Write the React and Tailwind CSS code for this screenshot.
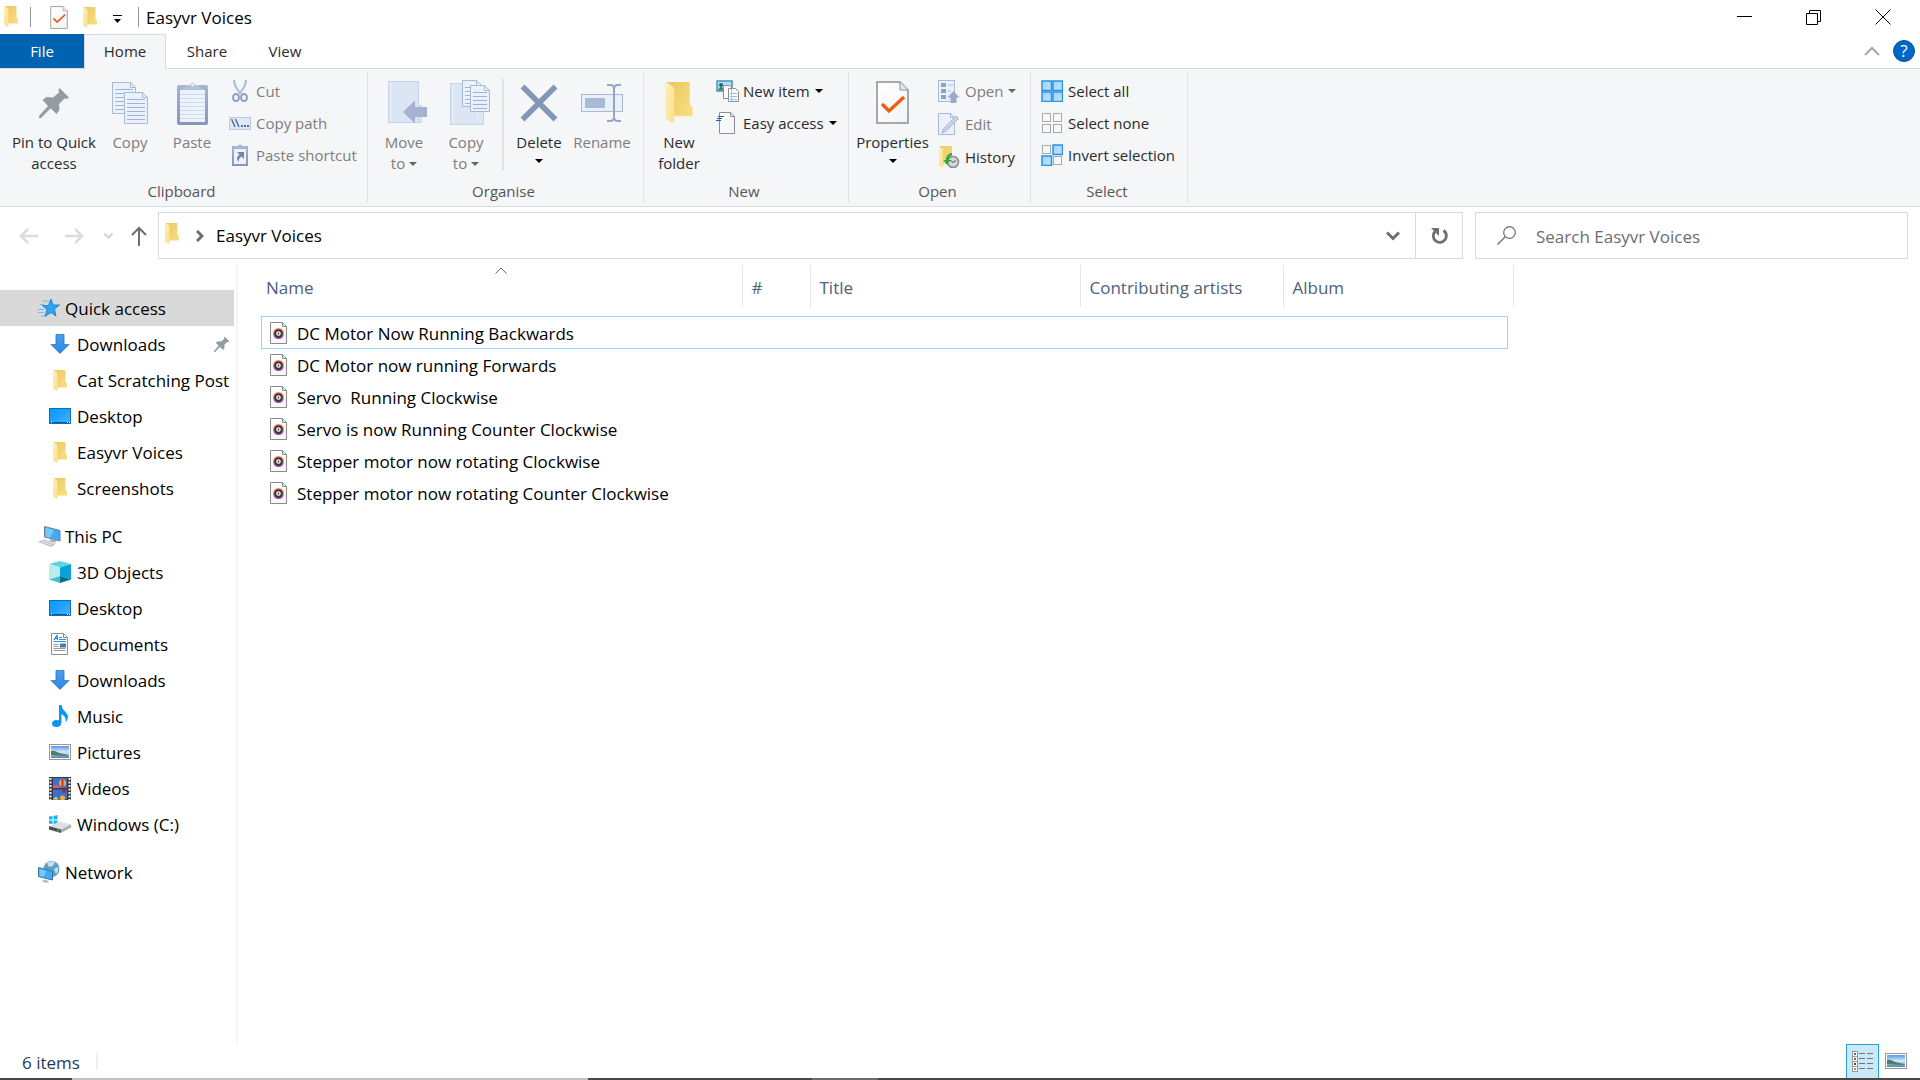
import React from "react";

/* ---------- shared gradients ---------- */
function Gradients() {
  return (
    <svg width="0" height="0" className="absolute" aria-hidden="true">
      <defs>
        <linearGradient id="folderBack" x1="0" y1="0" x2="1" y2="1">
          <stop offset="0" stopColor="#e9c762" />
          <stop offset="1" stopColor="#fbdf84" />
        </linearGradient>
        <linearGradient id="folderFlap" x1="0" y1="0" x2="1" y2="1">
          <stop offset="0" stopColor="#fff0b8" />
          <stop offset="1" stopColor="#fbdf8a" />
        </linearGradient>
        <linearGradient id="sky" x1="0" y1="0" x2="0" y2="1">
          <stop offset="0" stopColor="#5a94ea" />
          <stop offset="0.5" stopColor="#d4ecf6" />
          <stop offset="1" stopColor="#4d83b4" />
        </linearGradient>
        <linearGradient id="screen" x1="0" y1="0" x2="1" y2="1">
          <stop offset="0" stopColor="#0f98fb" />
          <stop offset="0.5" stopColor="#1fa2ff" />
          <stop offset="1" stopColor="#4cb6ff" />
        </linearGradient>
        <linearGradient id="paper" x1="0" y1="0" x2="1" y2="1">
          <stop offset="0" stopColor="#ffffff" />
          <stop offset="1" stopColor="#f1f3f6" />
        </linearGradient>
        <linearGradient id="disc" x1="0" y1="0" x2="0" y2="1">
          <stop offset="0" stopColor="#f58a3c" />
          <stop offset="0.5" stopColor="#d98a7a" />
          <stop offset="1" stopColor="#7d3fb0" />
        </linearGradient>
        <linearGradient id="clip" x1="0" y1="0" x2="0" y2="1">
          <stop offset="0" stopColor="#a5b5d2" />
          <stop offset="1" stopColor="#8497ba" />
        </linearGradient>
        <linearGradient id="cell" x1="0" y1="0" x2="1" y2="1">
          <stop offset="0" stopColor="#9fd4fb" />
          <stop offset="1" stopColor="#bfe4ff" />
        </linearGradient>
        <linearGradient id="arrowDown" x1="0" y1="0" x2="0" y2="1">
          <stop offset="0" stopColor="#4aa0ee" />
          <stop offset="1" stopColor="#2c87dc" />
        </linearGradient>
      </defs>
    </svg>
  );
}

function Svg({ w, h, vb, children, className = "" }) {
  return (
    <svg width={w} height={h} viewBox={vb || `0 0 ${w} ${h}`} fill="none" aria-hidden="true" className={`shrink-0 ${className}`}>
      {children}
    </svg>
  );
}

/* ---------- icons ---------- */
const Folder = ({ w = 14, h = 21 }) => (
  <Svg w={w} h={h} vb="0 0 28 42">
    <path d="M1 0h24v23l3 4v8H8V5z" fill="url(#folderBack)" />
    <path d="M0 0l9 6v34l-2 2-7-5z" fill="url(#folderFlap)" />
  </Svg>
);

const CheckDoc = ({ w = 18, h = 23 }) => (
  <Svg w={w} h={h} vb="0 0 33 43">
    <path d="M1 1h23l8 8v33H1z" fill="url(#paper)" stroke="#8f8f8f" strokeWidth="1.5" />
    <path d="M24 1v8h8" fill="#e6e6e6" stroke="#8f8f8f" />
    <path d="M6 23l7 7L28 16" stroke="#f25a16" strokeWidth="3.4" />
  </Svg>
);

const Pin = ({ size = 31, color = "#919da3" }) => (
  <Svg w={size} h={size} vb="0 0 31 31">
    <path d="M20.500 1L30 10.500l-2.500 1.500-2-.5-5.500 5.500.5 6-3 4-5.800-5.800L2 31H0v-2l9-10L3.500 13l4-3 6.500.5L20 5.500 19.500 3z" fill={color} />
  </Svg>
);

function Sheet({ x, y, w = 23, h = 31, step = 4 }) {
  const lines = [];
  for (let i = 7; i < h - 3; i += step) lines.push(i);
  return (
    <g transform={`translate(${x} ${y})`}>
      <path d={`M.5 .5h${w - 6}l5 5v${h - 6}H.5z`} fill="#eaf1fb" stroke="#a8b9d6" />
      <path d={`M${w - 5.5} .5v5h5`} stroke="#a8b9d6" />
      {lines.map((l) => (
        <path key={l} d={`M3 ${l + 0.5}h${w - 6}`} stroke="#a0b2d2" />
      ))}
    </g>
  );
}

const CopyIcon = () => (
  <Svg w={36} h={42}>
    <Sheet x={0} y={0} w={24} h={32} />
    <Sheet x={12} y={10} w={24} h={32} />
  </Svg>
);

const PasteIcon = () => (
  <Svg w={31} h={44}>
    <rect x="0" y="4" width="31" height="40" rx="2" fill="url(#clip)" />
    <rect x="3" y="9" width="25" height="32" fill="#eef3fb" />
    {[13, 17, 21, 25, 29, 33, 37].map((y) => (
      <path key={y} d={`M3 ${y + 0.5}h25`} stroke="#cfdaee" />
    ))}
    <path d="M5 9l5-5h3q2.500-4.500 5 0h3l5 5z" fill="#b3c0d9" />
    <circle cx="15.500" cy="4" r="1.500" fill="#eef3fb" />
  </Svg>
);

const CutIcon = () => (
  <Svg w={22} h={22}>
    <path d="M5 0q0 5 3 9l4 5M17 0q0 5-3 9l-4 5" stroke="#a9bad8" strokeWidth="2" />
    <ellipse cx="7" cy="17.500" rx="3" ry="3.500" stroke="#8fa1c4" strokeWidth="2" />
    <ellipse cx="15" cy="17.500" rx="3" ry="3.500" stroke="#8fa1c4" strokeWidth="2" />
  </Svg>
);

const CopyPathIcon = () => (
  <Svg w={22} h={22}>
    <rect x=".5" y="5.500" width="21" height="12" fill="#dfe8f6" stroke="#b9c8e2" />
    <path d="M2.500 7l3.500 8M6.500 7l3.500 8" stroke="#5d7092" strokeWidth="1.500" />
    <path d="M12 14h2M15 14h2M18 14h2" stroke="#5d7092" strokeWidth="2" />
  </Svg>
);

const PasteShortcutIcon = () => (
  <Svg w={22} h={22}>
    <rect x="3" y="2" width="16" height="20" fill="url(#clip)" />
    <rect x="5" y="5" width="12" height="15" fill="#eef3fb" />
    <path d="M7 4l4-4 4 4z" fill="#a5b5d2" />
    <path d="M8 8h7v7l-2.500-2.500Q9.500 14 9.500 18 6 14 10.500 10.500z" fill="#6f86b3" />
  </Svg>
);

const MoveToIcon = () => (
  <Svg w={46} h={43} vb="-7 0 46 43">
    <path d="M.5 .5h30v24h3v17H.5z" fill="#dbe5f4" stroke="#c6d3e8" />
    <path d="M3 1v40" stroke="#eaf1fb" />
    <path d="M30.500 42v-18" stroke="#c6d3e8" />
    <path d="M15 31l12-11.500V26h12v10H27v6.500z" fill="#a3b3d0" />
  </Svg>
);

const CopyToIcon = () => (
  <Svg w={49} h={45} vb="-8 0 49 45">
    <path d="M.5 3.500h30v24h3v17H.5z" fill="#dbe5f4" stroke="#c6d3e8" />
    <path d="M3 4v40M28 44V30" stroke="#eaf1fb" />
    <Sheet x={12} y={0} w={20} h={27} />
    <Sheet x={20} y={5} w={20} h={27} />
  </Svg>
);

const DeleteIcon = () => (
  <Svg w={38} h={38}>
    <path d="M2.500 2.500l33 33M35.500 2.500l-33 33" stroke="#8496b8" strokeWidth="5.500" />
  </Svg>
);

const RenameIcon = () => (
  <Svg w={42} h={38}>
    <rect x=".5" y="10.500" width="41" height="17" fill="#e8f0fb" stroke="#a8b9d6" />
    <rect x="4" y="14" width="20" height="10" fill="#a9bad6" />
    <path d="M26 1h3q4 0 4 4v28q0 4-4 4h-3M40 1h-3q-4 0-4 4M33 33q0 4 4 4h3" stroke="#94a6c6" strokeWidth="2" />
  </Svg>
);

const NewItemIcon = () => (
  <Svg w={23} h={22}>
    <rect x="1" y="1" width="15" height="10" fill="#b9ddf0" stroke="#4393bd" strokeWidth="1.500" />
    <circle cx="5" cy="5" r="2" fill="#2f5d75" />
    <path d="M2 10l3-4 3 4z" fill="#3c7f5a" />
    <path d="M7.500 5.500h6l3 3v10h-9z" fill="#fff" stroke="#8f8f8f" />
    <path d="M12.500 8.500h7l3 3v10h-10z" fill="#fff" stroke="#8f8f8f" />
    <path d="M14 13.500h7M14 16.500h7M14 19.500h7" stroke="#8fc0ee" />
    <path d="M15.500 9v12" stroke="#e7aab0" />
  </Svg>
);

const EasyAccessIcon = () => (
  <Svg w={22} h={22}>
    <path d="M3.500 .5h11l4 4v17h-15z" fill="url(#paper)" stroke="#8f8f8f" />
    <path d="M14.500 .5v4h4" stroke="#8f8f8f" />
    <path d="M2 4.500h6M1 6.500h5M0 8.500h5" stroke="#1d62ad" strokeWidth="1.200" />
  </Svg>
);

const OpenIcon = () => (
  <Svg w={22} h={23}>
    <rect x=".5" y=".5" width="16" height="21" fill="#eaf1fb" stroke="#a8b9d6" />
    <path d="M3 3h5v4H3zM3 9h5v4H3zM3 15h5v4H3z" fill="#8fa2c6" />
    <path d="M10 5h5M10 11h3" stroke="#a8b9d6" />
    <path d="M15.500 11l6 6.500h-3V23h-6v-5.500h-3z" fill="#9aabc9" />
  </Svg>
);

const EditIcon = () => (
  <Svg w={22} h={22}>
    <path d="M.5 .5h12l4 4v17H.5z" fill="#eaf1fb" stroke="#a8b9d6" />
    <path d="M12.500 .5v4h4" stroke="#a8b9d6" />
    <path d="M4 20l1.500-4L18 3l2.500 2.500L8 18z" fill="#c7d4e9" stroke="#a3b5d3" />
  </Svg>
);

const HistoryIcon = () => (
  <Svg w={22} h={22}>
    <path d="M1 0h13v18H5z" fill="url(#folderBack)" />
    <path d="M1 0l4 3v19l-4-3z" fill="url(#folderFlap)" />
    <circle cx="15" cy="16" r="5.500" fill="#d5d8da" stroke="#85898c" strokeWidth="1.500" />
    <path d="M12 14l3 2.500 3-2" stroke="#555" />
    <path d="M14 8q-5 1-5 7" stroke="#2faa3c" strokeWidth="2.500" />
    <path d="M5.500 14h7L9 19z" fill="#2faa3c" />
  </Svg>
);

function SelectIcon({ on }) {
  const spots = [[1, 1], [12, 1], [1, 12], [12, 12]];
  return (
    <Svg w={22} h={22}>
      {spots.map(([x, y], i) =>
        on[i] ? (
          <rect key={i} x={x} y={y} width="9.500" height="9.500" fill="url(#cell)" stroke="#2b93e0" strokeWidth="1.500" />
        ) : (
          <rect key={i} x={x + 0.5} y={y + 0.5} width="8" height="8" fill="#f7f7f7" stroke="#a9a9a9" />
        )
      )}
    </Svg>
  );
}

const Caret = ({ color = "#000" }) => (
  <Svg w={8} h={4}>
    <path d="M0 0h8L4 4z" fill={color} />
  </Svg>
);

const StarIcon = () => (
  <Svg w={22} h={18}>
    <path d="M13 0l2.200 6H21.500l-5 4 1.500 7-5-3.500L7 17.500 9 10.500 4.500 6.500h6z" fill="#2ba4f4" stroke="#1679c4" strokeWidth=".8" />
    <path d="M4 2h7M2 5.500h4M0 10.500h6M0 13.500h6M3 17h4" stroke="#6bbdf0" />
  </Svg>
);

const DownloadIcon = () => (
  <Svg w={22} h={20}>
    <path d="M7 .5h8v10h5L11 19.500 2 10.500h5z" fill="url(#arrowDown)" stroke="#2578c6" strokeWidth=".8" />
  </Svg>
);

const DesktopIcon = () => (
  <Svg w={22} h={16}>
    <rect x=".5" y=".5" width="21" height="15" fill="url(#screen)" stroke="#0c6fb8" />
    <path d="M1 14.500h20" stroke="#07579a" />
    <path d="M2 14.500h1M18 14.500h1M20 14.500h1" stroke="#fff" />
  </Svg>
);

const PcIcon = () => (
  <Svg w={23} h={21}>
    <path d="M6.500 .5l15.500 4v10.500L6.500 11z" fill="#3faaf5" stroke="#6a8397" />
    <path d="M7.500 1.800L16 4 12 12 7.500 10.700z" fill="#79c6fa" />
    <path d="M13 13l6 1.500-2 2-6-1.500z" fill="#a4acb3" />
    <path d="M0 16l6-2.500 12 4-4.500 3.500z" fill="#b9bfc4" />
    <path d="M3 16l11 3M5 14.800l11 3" stroke="#eef0f2" strokeWidth=".8" />
  </Svg>
);

const CubeIcon = () => (
  <Svg w={22} h={22}>
    <path d="M11 0l11 3-11 3.500L0 3z" fill="#5ed3e4" />
    <path d="M0 3l11 3.500V15L0 18.500z" fill="#bdecef" />
    <path d="M22 3L11 6.500V15l11 3.500z" fill="#07a3d8" />
    <path d="M0 18.500L11 15v7z" fill="#46c1cc" />
    <path d="M22 18.500L11 15v7z" fill="#046f86" />
  </Svg>
);

const DocumentIcon = () => (
  <Svg w={22} h={22}>
    <path d="M2.500 .5h12l4 4v17h-16z" fill="#fff" stroke="#8f8f8f" />
    <path d="M14.500 .5v4h4" stroke="#8f8f8f" />
    <path d="M5 7l3-4.500L8.500 7M6 5.500h2.500" stroke="#1b84cf" strokeWidth="1.200" />
    <path d="M10 4.500h3M10 6.500h7M4.500 8.500h12.500" stroke="#1b9be6" />
    <path d="M4.500 11.500h5M4.500 13.500h5M4.500 15.500h12M4.500 17.500h12" stroke="#9b9b9b" />
    <rect x="11" y="10.500" width="6" height="4" fill="#3f7dae" />
  </Svg>
);

const MusicIcon = () => (
  <Svg w={22} h={22}>
    <ellipse cx="7.500" cy="18.500" rx="4.500" ry="3.500" fill="#0c97ee" />
    <path d="M10 18V0h2.500q.5 4 4 7 5 5 0 10.500 1.500-5-4-8.500V18z" fill="#0c97ee" />
  </Svg>
);

const PictureIcon = () => (
  <Svg w={22} h={16}>
    <rect x=".5" y=".5" width="21" height="15" fill="#fff" stroke="#989898" />
    <rect x="2" y="2" width="18" height="12" fill="url(#sky)" />
    <path d="M2 7q4-1 7 1.500 4 1.500 8 2L20 12q-8 0-18-1z" fill="#4c7f68" />
  </Svg>
);

const VideoIcon = () => (
  <Svg w={22} h={23}>
    <rect width="22" height="23" fill="#3b3b3b" />
    <path d="M1.500 1v22M20.500 1v22" stroke="#f0f0f0" strokeWidth="2" strokeDasharray="2 1.500" />
    <rect x="4" y="1" width="14" height="10" fill="#3c6fd0" />
    <rect x="4" y="12.500" width="14" height="10" fill="#3c6fd0" />
    <circle cx="13.500" cy="6" r="3.500" fill="#f0b429" />
    <path d="M13.500 2.500v7" stroke="#c92a2a" strokeWidth="2" />
    <path d="M4 9q4-4 8 2H4z" fill="#d6569b" />
    <path d="M12 12.500h6l-3 4z" fill="#b02525" />
    <circle cx="13.500" cy="21" r="2.500" fill="#f0b429" />
    <path d="M4 22l3-2 3 2.500H4z" fill="#e6e65a" />
  </Svg>
);

const DriveIcon = () => (
  <Svg w={22} h={18}>
    <path d="M0 1.500l3.500-.5v3.500H0zM4.500 1L8.500 0v4.500h-4zM0 5.500h3.500V9L0 8.500zM4.500 5.500h4V10l-4-.7z" fill="#0fb5f0" />
    <path d="M1 11l9-4.500 12 3-10 5z" fill="#dcdee0" />
    <path d="M0 11l12 3.500V18L0 14.500z" fill="#4b4e50" />
    <path d="M12 14.500l10-5v3L12 18z" fill="#a9acae" />
    <path d="M8 15.500h2" stroke="#3bd14b" strokeWidth="1.500" />
  </Svg>
);

const NetworkIcon = () => (
  <Svg w={22} h={22}>
    <circle cx="13.500" cy="8" r="8" fill="#5b9fc4" />
    <path d="M9 2q4-3 8-1l-2 4-4 1zM16 8l4-2q1 4-2 7z" fill="#bfe0ee" />
    <path d="M.5 6.500l14 4v8.500l-14-3.500z" fill="#3faaf5" stroke="#3b7297" />
    <path d="M1.500 8l7 2-3 6-4-1z" fill="#79c6fa" />
    <path d="M6 18.500l5 1.500-2 2-5-1.500z" fill="#b4bbc1" />
  </Svg>
);

const AudioFileIcon = () => (
  <Svg w={17} h={22}>
    <path d="M.5 .5h12l4 4v17H.5z" fill="url(#paper)" stroke="#8a8a8a" />
    <path d="M12.500 .5v4h4" stroke="#8a8a8a" />
    <circle cx="8.500" cy="11.500" r="5.500" fill="url(#disc)" />
    <circle cx="8.500" cy="11.500" r="4.300" fill="#3d3238" />
    <circle cx="8.500" cy="11.500" r="2.300" fill="#fff" />
    <circle cx="8.500" cy="11.500" r=".9" fill="#3d3238" />
  </Svg>
);

const DetailsIcon = () => (
  <Svg w={22} h={22}>
    {[0, 5, 10, 15].map((y, i) => (
      <g key={y}>
        <rect x=".5" y={y + 0.5} width="5" height="5" fill="#fff" stroke="#999" />
        <rect x="2" y={y + 2} width="2" height="2" fill={["#2d6fc4", "#6b7a22", "#b3261e", "#8a9a9a"][i]} />
        <path d={`M7 ${y + 2.5}h6M15 ${y + 2.5}h6`} stroke="#707a7c" />
      </g>
    ))}
  </Svg>
);

/* ---------- ribbon pieces ---------- */
function BigButton({ icon, lines, width, disabled, caret }) {
  return (
    <button type="button" disabled={disabled} className={`flex flex-col items-center ${width} ${disabled ? "text-[#7d7d7d]" : "text-[#2b2b2b]"}`}>
      <span className="flex h-[57px] items-center justify-center pb-0.5">{icon}</span>
      {lines.map((l, i) => (
        <span key={l} className="flex items-center gap-1 whitespace-nowrap leading-[21px]">
          {l}
          {caret === "inline" && i === lines.length - 1 && <Caret color="#666" />}
        </span>
      ))}
      {caret === "below" && (
        <span className="flex h-4 items-center">
          <Caret />
        </span>
      )}
    </button>
  );
}

function SmallButton({ icon, label, disabled, caret }) {
  return (
    <button type="button" disabled={disabled} className={`flex h-8 items-center gap-[5px] whitespace-nowrap ${disabled ? "text-[#7d7d7d]" : "text-[#2b2b2b]"}`}>
      <span className="flex w-[22px] justify-center">{icon}</span>
      {label}
      {caret && <Caret color={disabled ? "#666" : "#000"} />}
    </button>
  );
}

function Group({ title, width, pad, children }) {
  return (
    <section aria-label={title} className={`my-[3px] flex shrink-0 flex-col border-r border-[#e2e3e4] ${width}`}>
      <div className={`flex h-[109px] items-start pt-[3px] ${pad}`}>{children}</div>
      <h2 className="pr-1 text-center leading-6 text-[#555]">{title}</h2>
    </section>
  );
}

const Divider = ({ className }) => <span className={`w-px bg-[#999] ${className}`} />;

function Ribbon() {
  return (
    <div className="flex h-[139px] shrink-0 border-y border-[#dadbdc] bg-[#f5f6f7] text-[15px]">
      <Group title="Clipboard" width="w-[368px]" pad="pl-2">
        <BigButton icon={<Pin />} lines={["Pin to Quick", "access"]} width="w-[92px]" />
        <BigButton icon={<CopyIcon />} lines={["Copy"]} width="w-[60px]" disabled />
        <BigButton icon={<PasteIcon />} lines={["Paste"]} width="w-[64px]" disabled />
        <div className="ml-[5px] flex flex-col">
          <SmallButton icon={<CutIcon />} label="Cut" disabled />
          <SmallButton icon={<CopyPathIcon />} label="Copy path" disabled />
          <SmallButton icon={<PasteShortcutIcon />} label="Paste shortcut" disabled />
        </div>
      </Group>
      <Group title="Organise" width="w-[276px]" pad="pl-[5px]">
        <BigButton icon={<MoveToIcon />} lines={["Move", "to"]} width="w-[62px]" caret="inline" disabled />
        <BigButton icon={<CopyToIcon />} lines={["Copy", "to"]} width="w-[62px]" caret="inline" disabled />
        <span className="mx-1 mt-1 ml-[5px] h-[91px] w-0.5 bg-[#dfe0e2]" />
        <BigButton icon={<DeleteIcon />} lines={["Delete"]} width="w-[62px]" caret="below" />
        <BigButton icon={<RenameIcon />} lines={["Rename"]} width="w-[64px]" disabled />
      </Group>
      <Group title="New" width="w-[205px]" pad="pl-[5px]">
        <BigButton icon={<Folder w={28} h={41} />} lines={["New", "folder"]} width="w-[60px]" />
        <div className="ml-[7px] flex flex-col">
          <SmallButton icon={<NewItemIcon />} label="New item" caret />
          <SmallButton icon={<EasyAccessIcon />} label="Easy access" caret />
        </div>
      </Group>
      <Group title="Open" width="w-[182px]" pad="pl-1">
        <BigButton icon={<CheckDoc w={33} h={43} />} lines={["Properties"]} width="w-[79px]" caret="below" />
        <div className="ml-1.5 flex flex-col gap-px">
          <SmallButton icon={<OpenIcon />} label="Open" caret disabled />
          <SmallButton icon={<EditIcon />} label="Edit" disabled />
          <SmallButton icon={<HistoryIcon />} label="History" />
        </div>
      </Group>
      <Group title="Select" width="w-[157px]" pad="pl-[10px]">
        <div className="flex flex-col">
          <SmallButton icon={<SelectIcon on={[1, 1, 1, 1]} />} label="Select all" />
          <SmallButton icon={<SelectIcon on={[0, 0, 0, 0]} />} label="Select none" />
          <SmallButton icon={<SelectIcon on={[0, 1, 1, 0]} />} label="Invert selection" />
        </div>
      </Group>
    </div>
  );
}

/* ---------- window chrome ---------- */
function TitleBar() {
  return (
    <header className="flex h-[34px] shrink-0 items-center">
      <span className="ml-1 pb-0.5"><Folder /></span>
      <Divider className="ml-3 h-5" />
      <button type="button" aria-label="Properties" className="ml-[19px]"><CheckDoc /></button>
      <button type="button" aria-label="New folder" className="ml-[15px]"><Folder /></button>
      <button type="button" aria-label="Customise Quick Access Toolbar" className="ml-4 pt-1">
        <Svg w={9} h={8}>
          <path d="M0 .5h9" stroke="#000" />
          <path d="M1 4h7L4.500 8z" fill="#000" />
        </Svg>
      </button>
      <Divider className="ml-4 h-5" />
      <h1 className="ml-[7px] pt-0.5 text-[17px] text-black">Easyvr Voices</h1>
      <div className="ml-auto flex h-full pr-[3px]">
        <button type="button" aria-label="Minimise" className="flex w-[69px] items-center justify-center">
          <Svg w={15} h={15}><path d="M0 6.500h15" stroke="#000" /></Svg>
        </button>
        <button type="button" aria-label="Restore" className="flex w-[69px] items-center justify-center">
          <Svg w={15} h={15}><path d="M.5 3.500h11v11H.5zM3.500 3V.5h11v11H12" stroke="#000" /></Svg>
        </button>
        <button type="button" aria-label="Close" className="flex w-[69px] items-center justify-center">
          <Svg w={16} h={16}><path d="M.5 .5l15 15M15.500 .5l-15 15" stroke="#000" /></Svg>
        </button>
      </div>
    </header>
  );
}

function Tabs() {
  return (
    <nav className="flex h-[34px] shrink-0 text-[15px] text-[#2b2b2b]">
      <button type="button" className="w-[84px] bg-[#0063b1] text-white">File</button>
      <button type="button" className="relative z-10 -mb-px w-[82px] border border-b-0 border-[#dadbdc] bg-[#f5f6f7] pb-0.5">Home</button>
      <button type="button" className="w-[82px]">Share</button>
      <button type="button" className="w-[74px]">View</button>
      <div className="ml-auto flex items-center gap-[13px] pr-[5px]">
        <button type="button" aria-label="Minimise the Ribbon">
          <Svg w={16} h={10}><path d="M1 9l7-7 7 7" stroke="#a5a5a5" strokeWidth="2" /></Svg>
        </button>
        <button type="button" aria-label="Help" className="flex size-[22px] items-center justify-center rounded-full border border-[#0b4f92] bg-[#0067c8] text-[17px] leading-5 text-white">?</button>
      </div>
    </nav>
  );
}

function AddressBar() {
  return (
    <div className="flex h-[58px] shrink-0 items-start pt-[5px] pr-3">
      <div className="flex h-12 w-[158px] items-center">
        <button type="button" aria-label="Back" className="ml-[19px]" disabled>
          <Svg w={19} h={16}><path d="M19 8H2M9 1L2 8l7 7" stroke="#dcdcdc" strokeWidth="2.500" /></Svg>
        </button>
        <button type="button" aria-label="Forward" className="ml-[27px]" disabled>
          <Svg w={19} h={16}><path d="M0 8h17M10 1l7 7-7 7" stroke="#dcdcdc" strokeWidth="2.500" /></Svg>
        </button>
        <button type="button" aria-label="Recent locations" className="ml-5" disabled>
          <Svg w={9} h={6}><path d="M.5 .5l4 4 4-4" stroke="#d2d2d2" strokeWidth="2" /></Svg>
        </button>
        <button type="button" aria-label="Up" className="ml-[18px]">
          <Svg w={16} h={20}><path d="M8 20V2M1 9l7-7 7 7" stroke="#6e6e6e" strokeWidth="2" /></Svg>
        </button>
      </div>
      <div className="flex h-[47px] flex-1 items-center border border-[#d9d9d9] pl-1.5">
        <span className="-mt-1"><Folder /></span>
        <Svg w={8} h={12} className="ml-[17px]"><path d="M1 1l5 5-5 5" stroke="#6e6e6e" strokeWidth="3" /></Svg>
        <button type="button" className="ml-3 text-[17px] text-black">Easyvr Voices</button>
        <button type="button" aria-label="Previous locations" className="mr-[15px] ml-auto">
          <Svg w={14} h={10}><path d="M1 1.500l6 6 6-6" stroke="#6e6e6e" strokeWidth="3" /></Svg>
        </button>
        <button type="button" aria-label="Refresh" className="flex h-full w-[47px] items-center justify-center border-l border-[#d9d9d9]">
          <Svg w={17} h={18}>
            <path d="M12.500 3.500A6.500 6.500 0 1 1 4 4.500" stroke="#6e6e6e" strokeWidth="2.800" />
            <path d="M0 1h8v8z" fill="#6e6e6e" />
          </Svg>
        </button>
      </div>
      <label className="ml-3 flex h-[47px] w-[433px] items-center border border-[#d9d9d9] pl-[21px]">
        <Svg w={19} h={19}>
          <circle cx="12.500" cy="6.500" r="5.800" stroke="#6e6e6e" strokeWidth="1.200" />
          <path d="M8.500 10.500L.5 18.500" stroke="#6e6e6e" strokeWidth="1.200" />
        </Svg>
        <input type="search" aria-label="Search Easyvr Voices" placeholder="Search Easyvr Voices" className="ml-5 min-w-0 flex-1 pt-0.5 text-[17px] outline-none placeholder:text-[#6d6d6d]" />
      </label>
    </div>
  );
}

/* ---------- navigation pane ---------- */
const sections = [
  {
    head: ["Quick access", <StarIcon />],
    active: true,
    items: [
      ["Downloads", <DownloadIcon />, true],
      ["Cat Scratching Post", <Folder />],
      ["Desktop", <DesktopIcon />],
      ["Easyvr Voices", <Folder />],
      ["Screenshots", <Folder />],
    ],
  },
  {
    head: ["This PC", <PcIcon />],
    items: [
      ["3D Objects", <CubeIcon />],
      ["Desktop", <DesktopIcon />],
      ["Documents", <DocumentIcon />],
      ["Downloads", <DownloadIcon />],
      ["Music", <MusicIcon />],
      ["Pictures", <PictureIcon />],
      ["Videos", <VideoIcon />],
      ["Windows (C:)", <DriveIcon />],
    ],
  },
  { head: ["Network", <NetworkIcon />], items: [] },
];

function Sidebar() {
  return (
    <nav className="flex w-[238px] shrink-0 flex-col gap-3 border-r-2 border-[#f5f5f5] pt-[25px] text-[17px] text-black">
      {sections.map((s) => (
        <ul key={s.head[0]}>
          <li>
            <a href="#" className={`mr-0.5 flex h-9 items-center pl-[38px] ${s.active ? "bg-[#d9d9d9]" : ""}`}>
              <span className="mr-[5px] flex w-[22px] justify-center">{s.head[1]}</span>
              <span className="pt-0.5">{s.head[0]}</span>
            </a>
          </li>
          {s.items.map(([name, icon, pinned]) => (
            <li key={name}>
              <a href="#" className="flex h-9 items-center pl-[49px] whitespace-nowrap">
                <span className="mr-1.5 flex w-[22px] justify-center">{icon}</span>
                <span className="pt-0.5">{name}</span>
                {pinned && <span className="mr-1.5 ml-auto"><Pin size={16} /></span>}
              </a>
            </li>
          ))}
        </ul>
      ))}
    </nav>
  );
}

/* ---------- file list ---------- */
const files = [
  "DC Motor Now Running Backwards",
  "DC Motor now running Forwards",
  "Servo  Running Clockwise",
  "Servo is now Running Counter Clockwise",
  "Stepper motor now rotating Clockwise",
  "Stepper motor now rotating Counter Clockwise",
];

const columns = [
  ["Name", "w-[481px] pl-[5px]"],
  ["#", "w-[68px] pl-[9px]"],
  ["Title", "w-[270px] pl-[9px]"],
  ["Contributing artists", "w-[203px] pl-[9px]"],
  ["Album", "w-[230px] pl-[9px]"],
];

function FileList() {
  return (
    <main className="min-w-0 flex-1 overflow-hidden pl-[23px] text-[17px]">
      <table className="w-[1252px] table-fixed border-collapse">
        <thead>
          <tr>
            {columns.map(([name, cls], i) => (
              <th key={name} scope="col" className={`relative h-[42px] border-r border-[#e5e5e5] pt-1 text-left font-normal whitespace-nowrap text-[#4c607a] ${cls}`}>
                {name}
                {i === 0 && (
                  <span className="absolute inset-x-0 top-0.5 flex justify-center">
                    <Svg w={12} h={7}><path d="M.5 6.500L6 1l5.500 5.500" stroke="#6a6a6a" /></Svg>
                  </span>
                )}
              </th>
            ))}
          </tr>
        </thead>
        <tbody className="text-black">
          <tr aria-hidden="true"><td className="h-[9px]" colSpan={5} /></tr>
          {files.map((f, i) => (
            <tr key={f}>
              <td colSpan={5} className="p-0">
                <div className={`mr-[5px] -mb-px flex h-[33px] items-center gap-2.5 border pl-2 whitespace-pre ${i === 0 ? "border-[#99d1ff]" : "border-transparent"}`}>
                  <AudioFileIcon />
                  <span className="pt-0.5">{f}</span>
                </div>
              </td>
            </tr>
          ))}
        </tbody>
      </table>
    </main>
  );
}

function StatusBar() {
  return (
    <footer className="shrink-0">
      <div className="flex h-[34px] items-center pr-[13px] text-[17px] text-[#1e395b]">
        <span className="ml-[22px] w-[74px] pt-[3px]">6 items</span>
        <span className="h-[17px] w-0.5 bg-[#f0f0f0]" />
        <button type="button" aria-label="Details view" className="ml-auto flex h-[34px] w-[33px] items-center justify-center border border-b-0 border-[#26a0da] bg-[#cbe8f6]">
          <DetailsIcon />
        </button>
        <button type="button" aria-label="Thumbnail view" className="ml-1.5"><PictureIcon /></button>
      </div>
      <div className="flex h-0.5 bg-[#484848]">
        <span className="ml-[72px] w-[516px] bg-[#c1c1c1]" />
        <span className="ml-[224px] w-[66px] bg-[#6b6b6b]" />
      </div>
    </footer>
  );
}

export default function App() {
  return (
    <div className="flex h-screen flex-col overflow-hidden bg-white font-['Open_Sans',sans-serif]">
      <Gradients />
      <TitleBar />
      <Tabs />
      <Ribbon />
      <AddressBar />
      <div className="flex min-h-0 flex-1">
        <Sidebar />
        <FileList />
      </div>
      <StatusBar />
    </div>
  );
}
